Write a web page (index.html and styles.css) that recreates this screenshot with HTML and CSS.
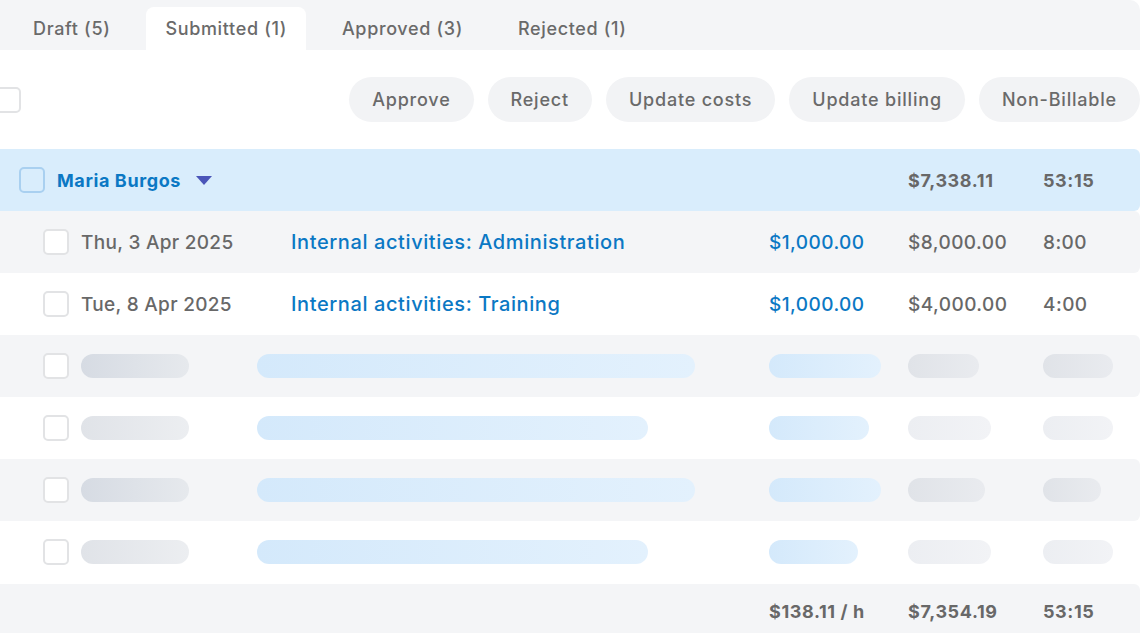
FILE: index.html
```html
<!DOCTYPE html>
<html lang="en">
<head>
<meta charset="utf-8">
<title>Timesheets</title>
<link rel="stylesheet" href="styles.css">
</head>
<body>
<div class="panel">
  <div class="tabs">
    <div class="tab">Draft (5)</div>
    <div class="tab active">Submitted (1)</div>
    <div class="tab">Approved (3)</div>
    <div class="tab">Rejected (1)</div>
  </div>

  <div class="toolbar">
    <span class="check check-top"></span>
    <div class="actions">
      <button class="btn">Approve</button>
      <button class="btn">Reject</button>
      <button class="btn">Update costs</button>
      <button class="btn">Update billing</button>
      <button class="btn">Non-Billable</button>
    </div>
  </div>

  <div class="group-row">
    <div class="group-name">
      <span class="check check-blue"></span>
      <span class="name">Maria Burgos</span>
      <svg class="caret" width="16" height="9" viewBox="0 0 16 9"><path d="M0 0H16L8 9Z" fill="#4a55b8"/></svg>
    </div>
    <div class="num bold">$7,338.11</div>
    <div class="num bold">53:15</div>
  </div>

  <div class="row gray">
    <div><span class="check"></span></div>
    <div class="date">Thu, 3 Apr 2025</div>
    <div class="project">Internal activities: Administration</div>
    <div class="num blue">$1,000.00</div>
    <div class="num">$8,000.00</div>
    <div class="num">8:00</div>
  </div>

  <div class="row">
    <div><span class="check"></span></div>
    <div class="date">Tue, 8 Apr 2025</div>
    <div class="project">Internal activities: Training</div>
    <div class="num blue">$1,000.00</div>
    <div class="num">$4,000.00</div>
    <div class="num">4:00</div>
  </div>

  <div class="row gray">
    <div><span class="check"></span></div>
    <div><span class="sk sk-date"></span></div>
    <div><span class="sk sk-blue" style="width:438px"></span></div>
    <div><span class="sk sk-blue" style="width:112px"></span></div>
    <div><span class="sk sk-gray" style="width:71px"></span></div>
    <div><span class="sk sk-gray" style="width:70px"></span></div>
  </div>

  <div class="row">
    <div><span class="check"></span></div>
    <div><span class="sk sk-date"></span></div>
    <div><span class="sk sk-blue" style="width:391px"></span></div>
    <div><span class="sk sk-blue" style="width:100px"></span></div>
    <div><span class="sk sk-gray" style="width:83px"></span></div>
    <div><span class="sk sk-gray" style="width:70px"></span></div>
  </div>

  <div class="row gray">
    <div><span class="check"></span></div>
    <div><span class="sk sk-date"></span></div>
    <div><span class="sk sk-blue" style="width:438px"></span></div>
    <div><span class="sk sk-blue" style="width:112px"></span></div>
    <div><span class="sk sk-gray" style="width:77px"></span></div>
    <div><span class="sk sk-gray" style="width:58px"></span></div>
  </div>

  <div class="row">
    <div><span class="check"></span></div>
    <div><span class="sk sk-date"></span></div>
    <div><span class="sk sk-blue" style="width:391px"></span></div>
    <div><span class="sk sk-blue" style="width:89px"></span></div>
    <div><span class="sk sk-gray" style="width:83px"></span></div>
    <div><span class="sk sk-gray" style="width:70px"></span></div>
  </div>

  <div class="footer">
    <div></div>
    <div class="num bold">$138.11 / h</div>
    <div class="num bold">$7,354.19</div>
    <div class="num bold">53:15</div>
  </div>
</div>
</body>
</html>
```

FILE: styles.css
```css
* { box-sizing: border-box; }

html, body {
  margin: 0;
  padding: 0;
  background: #ffffff;
  overflow: hidden;
}

body {
  font-family: "Inter", "Open Sans", "Liberation Sans", sans-serif;
  font-weight: 500;
  color: #686868;
  width: 1146px;
  height: 633px;
}

.panel {
  width: 1140px;
  display: flex;
  flex-direction: column;
}

/* Tabs */
.tabs {
  height: 50px;
  background: #f4f5f7;
  border-radius: 0 10px 0 0;
  display: flex;
  align-items: flex-end;
  padding-left: 14px;
  gap: 17px;
}

.tab {
  height: 43px;
  padding: 0 19px;
  display: flex;
  align-items: center;
  font-size: 18px;
  letter-spacing: 0.65px;
  color: #6a6a6a;
  border-radius: 8px 8px 0 0;
}

.tab.active {
  background: #ffffff;
}

/* Toolbar */
.toolbar {
  height: 99px;
  display: flex;
  align-items: center;
  justify-content: space-between;
}

.check {
  display: inline-block;
  width: 26px;
  height: 26px;
  border: 2px solid #e2e3e5;
  border-radius: 5px;
  background: #ffffff;
  vertical-align: middle;
}

.check-top {
  margin-left: -5px;
}

.actions {
  display: flex;
  gap: 14px;
}

.btn {
  height: 45px;
  padding: 0 23px;
  border: none;
  border-radius: 23px;
  background: #f2f3f5;
  font-family: inherit;
  font-weight: 500;
  font-size: 18px;
  letter-spacing: 0.8px;
  color: #6a6a6a;
}

/* Group row */
.group-row {
  height: 62px;
  background: #d9edfc;
  border-radius: 0 6px 6px 0;
  display: grid;
  grid-template-columns: 1fr 135px 97px;
  align-items: center;
  padding-left: 19px;
}

.group-name {
  display: flex;
  align-items: center;
}

.check-blue {
  background: #d9edfc;
  border-color: #a9d0f0;
}

.name {
  margin-left: 12px;
  font-size: 18px;
  font-weight: 700;
  letter-spacing: 0.6px;
  color: #0b78c4;
}

.caret {
  margin-left: 15px;
}

/* Rows */
.row, .footer {
  display: grid;
  grid-template-columns: 38px 176px 512px 139px 135px 97px;
  align-items: center;
  padding-left: 43px;
  border-radius: 0 6px 6px 0;
}

.row {
  height: 62px;
}

.row > div {
  display: flex;
  align-items: center;
}

.gray {
  background: #f4f5f7;
}

.date {
  font-size: 19px;
  letter-spacing: 0.3px;
  color: #686868;
}

.project {
  padding-left: 34px;
  font-size: 20px;
  letter-spacing: 0.6px;
  color: #0b78c4;
}

.num {
  font-size: 19px;
  letter-spacing: 0.45px;
  color: #686868;
}

.num.blue {
  color: #0b78c4;
}

.num.bold {
  font-size: 18px;
  font-weight: 700;
  letter-spacing: 0.6px;
}

.footer {
  height: 54px;
  margin-top: 1px;
  background: #f4f5f7;
  grid-template-columns: 726px 139px 135px 97px;
  border-radius: 0 6px 0 0;
}

/* Skeletons */
.sk {
  display: block;
  height: 24px;
  border-radius: 12px;
}

.sk-date {
  width: 108px;
  background: linear-gradient(90deg, #d6dbe3, #e6e9ed);
}

.row:not(.gray) .sk-date {
  background: linear-gradient(90deg, #e0e3e8, #eceef1);
}

.sk-blue {
  background: linear-gradient(90deg, #d4e9fb, #e3f1fd);
}

.sk-gray {
  background: linear-gradient(90deg, #e0e3e8, #e9ebef);
}

.row:not(.gray) .sk-gray {
  background: linear-gradient(90deg, #eceef2, #f2f3f6);
}
```
